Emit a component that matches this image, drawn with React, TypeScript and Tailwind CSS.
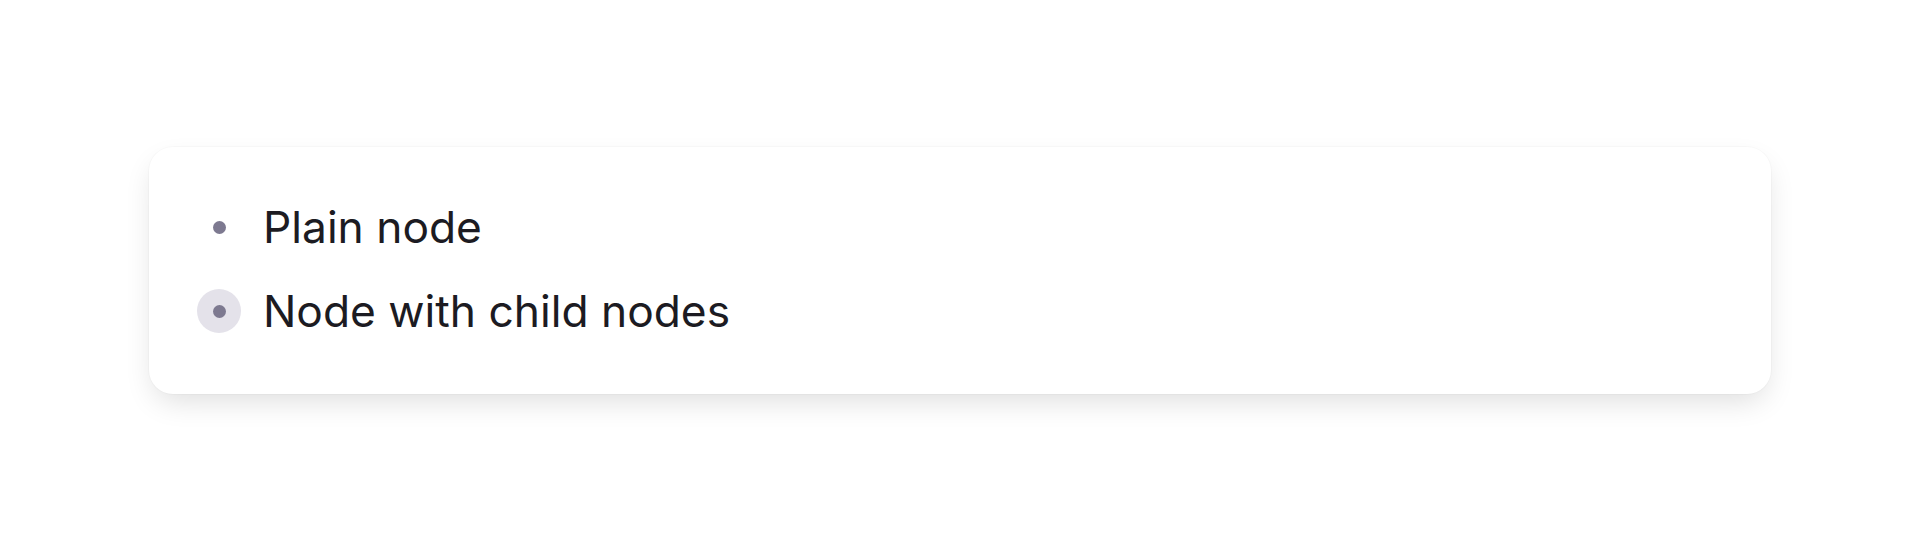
import React from "react";

type TreeNode = {
  label: string;
  children?: TreeNode[];
};

const nodes: TreeNode[] = [
  { label: "Plain node" },
  { label: "Node with child nodes", children: [{ label: "Child" }] },
];

function Bullet({ hasChildren }: { hasChildren: boolean }) {
  return (
    <span
      className={
        hasChildren
          ? "flex size-11 shrink-0 items-center justify-center rounded-full bg-[#e4e2ea]"
          : "flex size-11 shrink-0 items-center justify-center rounded-full"
      }
    >
      <span className="size-[13px] rounded-full bg-[#7d7990]" />
    </span>
  );
}

export default function App() {
  return (
    <div
      className="flex h-[541px] w-full items-center justify-center bg-white px-[149px]"
      style={{ fontFamily: "Inter, 'Noto Sans', sans-serif" }}
    >
      <ul className="flex w-full flex-col gap-6 rounded-3xl bg-white pt-[50px] pb-[53px] pl-12 pr-12 shadow-[0_12px_30px_-6px_rgba(0,0,0,0.14),0_0_0_1px_rgba(0,0,0,0.02)]">
        {nodes.map((node) => (
          <li key={node.label} className="flex h-[60px] items-center gap-[22px]">
            <Bullet hasChildren={!!node.children} />
            <span className="text-[44.3px] leading-none text-[#1c1b22]">
              {node.label}
            </span>
          </li>
        ))}
      </ul>
    </div>
  );
}
